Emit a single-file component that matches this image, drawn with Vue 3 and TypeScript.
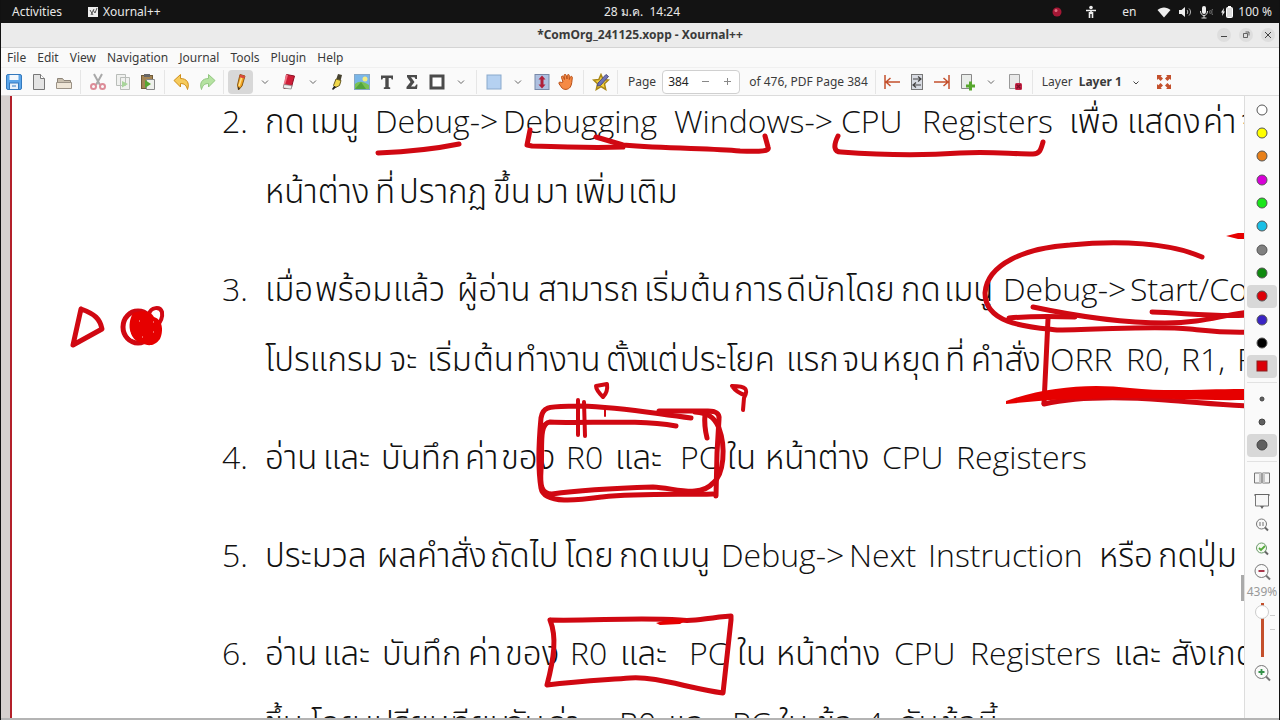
<script setup lang="ts">
import { ref } from 'vue'

interface Tool { name: string; icon?: string; kind?: 'chev' | 'sep'; active?: boolean }
type Word = [text: string, advance: number]

const page = ref(384)
const zoom = ref(96)

const menus = ['File', 'Edit', 'View', 'Navigation', 'Journal', 'Tools', 'Plugin', 'Help']

const sheet = '<path d="M3.5 1.5h7l4 4v11h-11z" fill="#e4e4e4" stroke="#777"/><path d="M10.500 1.500v4h4" fill="#fff" stroke="#777"/>'
const icons: Record<string, string> = {
  save: '<rect x="1.500" y="1.500" width="15" height="15" rx="1.500" fill="#5aa5ea" stroke="#3479bd"/><rect x="4.500" y="2" width="9" height="5" fill="#f4f8fc"/><rect x="4.500" y="10" width="9" height="6.500" fill="#e8f1fa" stroke="#3479bd"/><path d="M7 13h4" stroke="#3479bd"/>',
  create: sheet,
  open: '<path d="M2.500 15V5.500h5l1.500 2h6.500V15z" fill="#c9bfae" stroke="#8d8478"/><path d="M1.500 9.500h15V15.500h-15z" fill="#eee5d6" stroke="#9b9286"/>',
  cut: '<path d="M5 1l6 11M13 1L7 12" stroke="#a9a9a9" stroke-width="2" fill="none"/><circle cx="4.500" cy="13.500" r="2.500" fill="none" stroke="#dc8c98" stroke-width="2"/><circle cx="13.500" cy="13.500" r="2.500" fill="none" stroke="#dc8c98" stroke-width="2"/>',
  copy: '<path d="M2.500 1.500h9v11h-9zM6.500 4.500h9v12h-9z" fill="#f0f1ef" stroke="#b9bdb9"/><path d="M8 8l6 3-6 3.500z" fill="#a8d59a"/>',
  paste: '<rect x="2.500" y="2.500" width="11" height="13" fill="#a48555" stroke="#6f5a38"/><rect x="5" y="1" width="6" height="3" fill="#666"/><path d="M7.500 6.500h8v10h-8z" fill="#eef0ec" stroke="#888"/><path d="M6 7l6 4-6 4z" fill="#55a630"/>',
  undo: '<path d="M1 7.500L7.500 1.500v4c6 0 9.500 4 7 11-1-4-3-6-7-6v3.500z" fill="#f6cb5c" stroke="#cf8e18"/>',
  redo: '<path d="M17 7.500L10.500 1.500v4c-6 0-9.500 4-7 11 1-4 3-6 7-6v3.500z" fill="#b5e2a1" stroke="#92c780"/>',
  pen: '<path d="M8 1.500l5 1.500-3 10-3.500 4-1-5z" fill="#f5a623" stroke="#8b5a14"/><path d="M8 1.500l5 1.500-.700 2.400-5-1.500z" fill="#d9473f"/><path d="M9.500 5l-2.500 8" stroke="#ffe08a" stroke-width="1.500"/><path d="M6.500 17l-.500-3 2 1z" fill="#222"/>',
  eraser: '<path d="M6.500 1.500l8 1.500-3 11-7.500 1.500z" fill="#d01e38" stroke="#8e1025"/><path d="M6 1.500l2 .500-3.500 12-1.500-.500z" fill="#ef7384"/><path d="M4 11.500l8 1-.800 3.500-8-1z" fill="#efefef" stroke="#777" stroke-width=".700"/>',
  marker: '<path d="M10 1l4 1-1.500 6-4.500-1z" fill="#45412f"/><path d="M8 6l5 1.500-1.500 5-4 2-2-2z" fill="#f1d84b" stroke="#6a5c20"/><path d="M6 13l2.500 1-3.500 3-1-1z" fill="#222"/>',
  image: '<rect x="1.500" y="1.500" width="15" height="15" fill="#7ab6e8" stroke="#87a8c6"/><path d="M2 11c4-3 7-3 14 1v4H2z" fill="#79c255"/><path d="M2 16l6-7 5 7z" fill="#53a43e"/><circle cx="12" cy="6" r="2.500" fill="#f5ec82"/>',
  text: '<path d="M3 2.500h12v4h-1.300l-.700-1.500H10.700v9l1.500.500V16H5.800v-1.500L7.300 14V5H5l-.700 1.500H3z" fill="#4b4b4b"/>',
  tex: '<path d="M4 2h10v4h-1.500l-1-1.700H8L11.500 9 8 13.500h4l1.200-2H14.500l-.500 4.500H3.500v-2L7.500 9 4 4z" fill="#4b4b4b"/>',
  shape: '<rect x="3" y="3" width="12" height="12" fill="#fff" stroke="#4b4b4b" stroke-width="3"/>',
  select: '<rect x="2" y="2" width="14" height="14" fill="#b5d1f1" stroke="#8aa9cc"/>',
  vspace: '<rect x="2" y="1.500" width="14" height="15" fill="#aec0e0" stroke="#7989a8"/><path d="M9 2.500l3.500 4h-2v5h2L9 15.500l-3.500-4h2v-5h-2z" fill="#b01f38"/>',
  hand: '<path d="M5 9L3.500 4.500c-.500-1.500 1.500-2 2-.700l1 2.700-.500-4c0-1.500 2-1.500 2.200 0l.800 3.500.300-3.500c.200-1.300 2-1.200 2 0V6.500l1-2.500c.600-1.200 2.200-.600 2 .700-.400 3-.400 7-2 9.300-2 3-6.500 3-8.300 1L1.200 11c-1-1.500.600-2.700 2-1.500z" fill="#f58a45" stroke="#b95018"/>',
  star: '<path d="M9 1.500l2.200 5 5.300.500-4 3.800 1.200 5.700L9 13.700 4.300 16.500l1.200-5.700-4-3.800 5.300-.500z" fill="#f7d43c" stroke="#a98616" stroke-width="1.500"/><path d="M14 1.500l-8 8.500-.500 3 3-.500 8-9z" fill="#7075b6" stroke="#4d4d7d"/>',
  first: '<path d="M2 2v14M3 9h14M7.500 5L3 9l4.500 4" fill="none" stroke="#c4502c" stroke-width="1.500"/>',
  goto: '<rect x="3.500" y="1.500" width="11" height="15" fill="#d8dbe2" stroke="#777"/><path d="M5 6h8M10 3.500L13 6l-3 2.500M13 12H5M8 9.500L5 12l3 2.500" fill="none" stroke="#444" stroke-width="1.200"/>',
  last: '<path d="M16 2v14M1 9h14M10.500 5L15 9l-4.500 4" fill="none" stroke="#c4502c" stroke-width="1.500"/>',
  addpage: '<path d="M3.500 1.500h10v14h-10z" fill="#e9ece9" stroke="#888"/><path d="M12.500 8.500v9M8 13h9" stroke="#57a72d" stroke-width="3"/>',
  delpage: '<path d="M3.500 1.500h10v14h-10z" fill="#e9e9e9" stroke="#999"/><rect x="9" y="10" width="7" height="7" rx="1.500" fill="#c42446"/><path d="M10.500 11.500l4 4M14.500 11.500L10.500 15.500" stroke="#7c0c26" stroke-width="1.300"/>',
  full: '<path d="M2 2h5l-1.300 1.300L8 5.600 5.600 8 3.300 5.700 2 7zM16 2v5l-1.300-1.300L12.400 8 10 5.600l2.300-2.300L11 2zM2 16v-5l1.300 1.300L5.600 10 8 12.400l-2.300 2.300L7 16zM16 16h-5l1.300-1.300L10 12.400l2.400-2.400 2.300 2.300L16 11z" fill="#c4502c"/>',
  pair: '<path d="M1.500 4h7v10h-7zM9.500 4h7v10h-7z" fill="#f4f4f4" stroke="#777"/><path d="M6 4h2.500v10H6zM9.500 4H12v10H9.500z" fill="#c7c7c7"/>',
  present: '<path d="M1.500 3h15" stroke="#666" stroke-width="2"/><path d="M2.500 3v11h13V3" fill="#f7f7f7" stroke="#777"/><path d="M7 14h4l-2 3z" fill="#666"/>',
  zoomfit: '<circle cx="8.500" cy="8" r="5" fill="#f7f7f7" stroke="#777"/><path d="M12 11.500l3 3" stroke="#666" stroke-width="2"/><path d="M7 6v4M10 6v4" stroke="#888" stroke-width="1.200"/>',
  zoomok: '<circle cx="8.500" cy="8" r="5" fill="#f4faf0" stroke="#69976a"/><path d="M12 11.500l3 3" stroke="#666" stroke-width="2"/><path d="M6 8l2 2 4-4" stroke="#54a93a" stroke-width="1.800" fill="none"/>',
  zoomout: '<circle cx="8.500" cy="8" r="6.500" fill="#fafafa" stroke="#777"/><path d="M13 12.500l4 4" stroke="#777" stroke-width="2"/><path d="M5.500 8h6" stroke="#a02238" stroke-width="1.800"/>',
  zoomin: '<circle cx="8.500" cy="8" r="6.500" fill="#fafafa" stroke="#777"/><path d="M13 12.500l4 4" stroke="#777" stroke-width="2"/><path d="M5.500 8h6M8.500 5v6" stroke="#35924a" stroke-width="1.800"/>',
}

const sep: Tool = { name: '', kind: 'sep' }
const left: Tool[] = [
  { name: 'Save', icon: 'save' }, { name: 'New', icon: 'create' }, { name: 'Open', icon: 'open' }, sep,
  { name: 'Cut', icon: 'cut' }, { name: 'Copy', icon: 'copy' }, { name: 'Paste', icon: 'paste' }, sep,
  { name: 'Undo', icon: 'undo' }, { name: 'Redo', icon: 'redo' }, sep,
  { name: 'Pen', icon: 'pen', active: true }, { name: 'Pen options', kind: 'chev' },
  { name: 'Eraser', icon: 'eraser' }, { name: 'Eraser options', kind: 'chev' },
  { name: 'Highlighter', icon: 'marker' }, { name: 'Image', icon: 'image' }, { name: 'Text', icon: 'text' },
  { name: 'TeX', icon: 'tex' }, { name: 'Shape', icon: 'shape' }, { name: 'Shape options', kind: 'chev' }, sep,
  { name: 'Select', icon: 'select' }, { name: 'Select options', kind: 'chev' },
  { name: 'Vertical space', icon: 'vspace' }, { name: 'Hand', icon: 'hand' }, sep,
  { name: 'Default tool', icon: 'star' }, sep,
]
const right: Tool[] = [
  sep, { name: 'First page', icon: 'first' }, { name: 'Go to page', icon: 'goto' }, { name: 'Last page', icon: 'last' },
  { name: 'Add page', icon: 'addpage' }, { name: 'Page options', kind: 'chev' }, { name: 'Delete page', icon: 'delpage' }, sep,
]

const colors = [
  ['White', '#ffffff'], ['Yellow', '#ffff00'], ['Orange', '#e8801a'], ['Magenta', '#d800d8'], ['Green', '#1ae61a'],
  ['Light blue', '#1abfe6'], ['Gray', '#808080'], ['Dark green', '#0f8a0f'], ['Red', '#dc0008'], ['Blue', '#3a24c4'], ['Black', '#000000'],
]
const sizes = [['Fine', 4], ['Medium', 6], ['Thick', 10]] as const
const views: Tool[] = [
  { name: 'Paired pages', icon: 'pair' }, { name: 'Presentation', icon: 'present' },
  { name: 'Zoom 100%', icon: 'zoomfit' }, { name: 'Zoom fit', icon: 'zoomok' }, { name: 'Zoom out', icon: 'zoomout' },
]

const isThai = (s: string) => /[\u0e00-\u0e7f]/.test(s)

const items: { n: number; lines: Word[][] }[] = [
  { n: 2, lines: [
    [['กด', 45], ['เมนู', 65], ['Debug->', 128], ['Debugging', 171], ['Windows->', 167], ['CPU', 81], ['Registers', 147], ['เพื่อ', 58], ['แสดง', 76], ['ค่า', 38], ['จ', 30]],
    [['หน้าต่าง', 110], ['ที่', 24], ['ปรากฏ', 94], ['ขึ้น', 42], ['มา', 39], ['เพิ่ม', 54], ['เติม', 50]],
  ] },
  { n: 3, lines: [
    [['เมื่อ', 50], ['พร้อม', 78], ['แล้ว', 64], ['ผู้อ่าน', 81], ['สามารถ', 106], ['เริ่ม', 46], ['ต้น', 44], ['การ', 52], ['ดีบัก', 60], ['โดย', 55], ['กด', 43], ['เมนู', 59], ['Debug->', 127], ['Start/Con', 140]],
    [['โปรแกรม', 124], ['จะ', 38], ['เริ่ม', 46], ['ต้น', 43], ['ทำงาน', 90], ['ตั้ง', 34], ['แต่', 40], ['ประโยค', 106], ['แรก', 56], ['จน', 40], ['หยุด', 63], ['ที่', 26], ['คำสั่ง', 79], ['ORR', 76], ['R0,', 55], ['R1,', 56], ['R2', 40]],
  ] },
  { n: 4, lines: [
    [['อ่าน', 58], ['และ', 58], ['บันทึก', 84], ['ค่า', 36], ['ของ', 65], ['R0', 49], ['และ', 65], ['PC', 47], ['ใน', 38], ['หน้าต่าง', 117], ['CPU', 74], ['Registers', 140]],
  ] },
  { n: 5, lines: [
    [['ประมวล', 112], ['ผล', 40], ['คำสั่ง', 73], ['ถัด', 40], ['ไป', 35], ['โดย', 54], ['กด', 42], ['เมนู', 60], ['Debug->', 128], ['Next', 79], ['Instruction', 171], ['หรือ', 59], ['กด', 39], ['ปุ่ม', 60]],
  ] },
  { n: 6, lines: [
    [['อ่าน', 58], ['และ', 59], ['บันทึก', 86], ['ค่า', 37], ['ของ', 65], ['R0', 50], ['และ', 69], ['PC', 48], ['ใน', 39], ['หน้าต่าง', 118], ['CPU', 76], ['Registers', 144], ['และ', 57], ['สังเกต', 100]],
    [['ขึ้น', 46], ['โดย', 54], ['เปรียบ', 76], ['เทียบ', 64], ['กับ', 42], ['ค่า', 72], ['R0', 49], ['และ', 64], ['PC', 47], ['ใน', 38], ['ข้อ', 48], ['4', 34], ['กับ', 42], ['ข้อนี้', 80]],
  ] },
]
</script>

<template>
  <div class="desktop">
    <header class="shell">
      <div class="shell-left">
        <button type="button">Activities</button>
        <button type="button" class="app">
          <svg width="10" height="10" viewBox="0 0 10 10"><rect width="10" height="10" fill="#eee" /><path d="M2 3l3 5M6 2L3 8M5 3l2 3 2-5" stroke="#555" fill="none" /></svg>
          Xournal++
        </button>
      </div>
      <time>28 ม.ค.&nbsp; 14:24</time>
      <div class="shell-right">
        <svg class="rec" width="10" height="10" viewBox="0 0 10 10"><circle cx="5" cy="5" r="4.500" fill="#a51735" /><circle cx="4" cy="3.500" r="1.500" fill="#df6f80" /></svg>
        <svg class="access" width="12" height="14" viewBox="0 0 12 14"><circle cx="6" cy="2.500" r="1.800" fill="#eee" /><path d="M1 5.500h10M6 5v4M4.500 13V7M7.500 13V7" stroke="#eee" stroke-width="1.600" /></svg>
        <span class="lang">en</span>
        <svg width="14" height="12" viewBox="0 0 14 12"><path d="M7 11.500L.500 4C4 .500 10 .500 13.500 4z" fill="#eee" /></svg>
        <svg width="14" height="12" viewBox="0 0 14 12"><path d="M1 4h2.500L7 1v10L3.500 8H1z" fill="#eee" /><path d="M9 4c1 1 1 3 0 4M11 2.500c2 2 2 5 0 7" stroke="#bbb" fill="none" /></svg>
        <svg width="14" height="14" viewBox="0 0 14 14"><rect x="3" y="1" width="4" height="8" rx="2" fill="#eee" /><path d="M1.500 6c0 6 7 6 7 0M5 10v3M2.500 13h5" stroke="#ddd" fill="none" /><path d="M11.500 5c-1 1-1 3 0 4M13.500 4c-1 2-1 4 0 6" stroke="#777" fill="none" /></svg>
        <svg class="battery" width="14" height="14" viewBox="0 0 14 14"><path d="M4 3L1 7.500h1.500L2 11l3-4.500H3.500z" fill="#eee" /><rect x="6.500" y="2.500" width="6" height="10" rx="1" fill="#ddd" stroke="#fff" /><path d="M8 1.500h3" stroke="#fff" /></svg>
        <span>100 %</span>
      </div>
    </header>

    <div class="titlebar">
      <h1>*ComOrg_241125.xopp - Xournal++</h1>
      <div class="wm">
        <button type="button" aria-label="Minimize"><svg width="8" height="8" viewBox="0 0 8 8"><path d="M1 5.500h6" stroke="#444" /></svg></button>
        <button type="button" aria-label="Restore"><svg width="8" height="8" viewBox="0 0 8 8"><path d="M1.500 2.500h4v4h-4zM3.500 1h3.500v3.500" stroke="#444" stroke-width=".8" fill="none" /></svg></button>
        <button type="button" aria-label="Close"><svg width="8" height="8" viewBox="0 0 8 8"><path d="M1 1l6 6M7 1L1 7" stroke="#444" /></svg></button>
      </div>
    </div>

    <nav class="menubar">
      <button v-for="m in menus" :key="m" type="button">{{ m }}</button>
    </nav>

    <div class="toolbar">
      <template v-for="(t, i) in left" :key="i">
        <span v-if="t.kind === 'sep'" class="sep"></span>
        <button v-else type="button" :class="['tool', t.kind, { active: t.active }]" :aria-label="t.name">
          <svg v-if="t.icon" width="18" height="18" viewBox="0 0 18 18" v-html="icons[t.icon]"></svg>
          <svg v-else width="8" height="6" viewBox="0 0 8 6"><path d="M1 1.500l3 3 3-3" stroke="#666" fill="none" /></svg>
        </button>
      </template>
      <label class="page-label" for="page">Page</label>
      <div class="spin">
        <input id="page" v-model="page" type="text" inputmode="numeric" />
        <button type="button" aria-label="Previous page" @click="page--"><svg width="9" height="9" viewBox="0 0 9 9"><path d="M1 4.500h7" stroke="#888" /></svg></button>
        <button type="button" aria-label="Next page" @click="page++"><svg width="9" height="9" viewBox="0 0 9 9"><path d="M1 4.500h7M4.500 1v7" stroke="#888" /></svg></button>
      </div>
      <span class="page-total">of 476, PDF Page 384</span>
      <template v-for="(t, i) in right" :key="'r' + i">
        <span v-if="t.kind === 'sep'" class="sep"></span>
        <button v-else type="button" :class="['tool', t.kind]" :aria-label="t.name">
          <svg v-if="t.icon" width="18" height="18" viewBox="0 0 18 18" v-html="icons[t.icon]"></svg>
          <svg v-else width="8" height="6" viewBox="0 0 8 6"><path d="M1 1.500l3 3 3-3" stroke="#666" fill="none" /></svg>
        </button>
      </template>
      <button type="button" class="layer">
        <span>Layer</span><b>Layer 1</b>
        <svg width="8" height="6" viewBox="0 0 8 6"><path d="M1.500 2.500l2.500 2.500L6.500 2.500" stroke="#444" fill="none" /></svg>
      </button>
      <button type="button" class="tool" aria-label="Fullscreen"><svg width="18" height="18" viewBox="0 0 18 18" v-html="icons.full"></svg></button>
    </div>

    <div class="workspace">
      <main class="canvas">
        <article class="paper">
          <ol>
            <li v-for="item in items" :key="item.n">
              <span class="num">{{ item.n }}.</span>
              <div class="body">
                <p v-for="(line, l) in item.lines" :key="l">
                  <span v-for="(w, k) in line" :key="k" :class="['word', { thai: isThai(w[0]) }]" :style="{ width: w[1] + 'px' }">{{ w[0] }}</span>
                </p>
              </div>
            </li>
          </ol>
        </article>
        <svg class="ink" width="1244" height="622" viewBox="1 96 1244 622">
          <g class="stroke">
            <path d="M378 153Q425 151 459 144" />
            <path d="M530 130L527 145L532 146C560 147 595 148 623 147" />
            <path d="M596 137L623 145C670 149 710 148 740 151C762 152 770 151 768 147L765 136" />
            <path d="M838 136C833 146 834 152 841 152C880 155 920 156 960 153C990 151 1010 154 1033 154C1040 154 1041 149 1043 142" />
            <path d="M1202 257C1170 243 1120 240 1070 245C1025 248 987 264 985 293C985 325 1030 327 1057 330C1110 330 1150 325 1190 329C1210 331 1225 333 1250 332" />
            <path d="M1033 307C1080 317 1125 323 1165 323C1205 323 1220 315 1250 312" />
            <path d="M1152 312C1185 313 1215 317 1250 315" />
            <path d="M1009 318C1030 316 1050 316 1075 317" />
            <path d="M1048 319L1046 362L1044 403" />
            <path d="M1044 404C1080 396 1125 397 1165 400C1195 402 1220 405 1250 406" />
            <path d="M81 309L73 345L102 329C100 319 95 314 81 309" />
            <ellipse cx="138" cy="327" rx="15" ry="16" />
            <path d="M149 314C151 307 160 306 162 312C163 318 160 323 156 327" class="mid" />
            <path d="M691 418C650 413 622 407 580 406C550 407 543 405 541 418C538 450 538 470 541 488C544 505 580 500 602 497C640 493 680 495 713 494" />
            <path d="M676 426C635 419 585 424 550 422C538 423 543 450 541 470C540 485 541 494 552 494C580 490 620 488 653 487C675 488 700 498 713 483C724 475 726 447 719 428C714 416 707 413 695 412" />
            <path d="M659 411L708 411Q720 411 719 419L717 453L716 496" />
            <path d="M705 414C704 425 705 430 707 438" />
            <path d="M578 400V435M584 402L585 436" class="mid" />
            <path d="M596 386L607 384C608 391 605 395 603 397Q596 390 596 386" class="mid" />
            <path d="M605 408V416" class="thin" />
            <path d="M732 386C746 386 749 389 744 398L743 410M732 386Q737 393 745 395" class="mid" />
            <path d="M550 620C557 637 554 658 547 685C580 681 605 680 630 678C655 676 688 688 723 693L731 620V616C704 618 695 622 680 620C635 617 595 621 550 620" />
          </g>
          <g class="solid">
            <path d="M133 313C143 309 152 312 154 317C164 320 163 333 160 339C154 347 147 346 142 343C130 341 126 325 133 313Z" />
            <path d="M1006 401C1045 387 1090 383 1130 388C1170 392 1200 389 1245 389V400C1190 401 1140 396 1090 399L1050 400L1006 404Z" />
            <path d="M1226 236L1238 233H1245V239H1238Z" />
            <path d="M656 623L670 619H688L680 624L660 625Z" />
          </g>
          <path d="M127 324C126 332 129 337 132 339C131 333 129 329 127 324Z" fill="#fff" />
          <path d="M139 321h1M142 337h1M153 332h1M153 322h1" class="specks" />
        </svg>
        <span class="scroll-thumb"></span>
      </main>

      <aside class="side">
        <div class="cells palette">
          <button v-for="(c, i) in colors" :key="c[0]" type="button" :class="{ active: i === 8 }" :aria-label="c[0]">
            <svg width="12" height="12" viewBox="0 0 12 12"><circle cx="6" cy="6" r="5" :fill="c[1]" stroke="#555" /></svg>
          </button>
          <button type="button" class="active" aria-label="Custom color">
            <svg width="12" height="12" viewBox="0 0 12 12"><rect x="1" y="1" width="10" height="10" fill="#dc0008" stroke="#8a2020" /></svg>
          </button>
        </div>
        <span class="rule"></span>
        <div class="cells sizes">
          <button v-for="(s, i) in sizes" :key="s[0]" type="button" :class="{ active: i === 2 }" :aria-label="s[0]">
            <svg width="12" height="12" viewBox="0 0 12 12"><circle cx="6" cy="6" :r="s[1] / 2" fill="#606060" stroke="#444" /></svg>
          </button>
        </div>
        <span class="rule"></span>
        <div class="cells views">
          <button v-for="v in views" :key="v.name" type="button" :aria-label="v.name">
            <svg width="18" height="18" viewBox="0 0 18 18" v-html="icons[v.icon!]"></svg>
          </button>
        </div>
        <output class="pct">439%</output>
        <div class="slider">
          <input v-model="zoom" type="range" min="0" max="100" aria-label="Zoom" />
          <i></i><i></i>
        </div>
        <button type="button" class="zoomin" aria-label="Zoom in"><svg width="18" height="18" viewBox="0 0 18 18" v-html="icons.zoomin"></svg></button>
      </aside>
    </div>
  </div>
</template>

<style>
body { background: #fafafa; }
</style>

<style scoped>
* { box-sizing: border-box; }
.desktop {
  height: 100vh; display: flex; flex-direction: column; overflow: hidden;
  font: 12px/16px "Noto Sans", "Open Sans", sans-serif; color: #3a3a3a; background: #fafafa;
  border: solid #111; border-width: 0 1px;
}
button { font: inherit; color: inherit; border: 0; background: none; padding: 0; display: flex; align-items: center; justify-content: center; }
h1, p, ol { margin: 0; padding: 0; }
svg { display: block; flex: none; }

.shell { flex: none; height: 23px; background: #131313; color: #e8e8e8; display: grid; grid-template-columns: 1fr auto 1fr; align-items: center; padding: 0 7px 0 11px; }
.shell-left, .shell-right { display: flex; align-items: center; }
.shell-left { gap: 26px; }
.shell-right { justify-content: flex-end; gap: 7px; }
.app { gap: 5px; }
.rec { margin-right: 16px; }
.access { margin-right: 18px; }
.lang { margin-right: 14px; }
.battery { margin-right: -3px; }

.titlebar { flex: none; height: 25px; background: #ebebeb; border-bottom: 1px solid #d4d4d4; display: flex; align-items: center; justify-content: center; position: relative; }
.titlebar h1 { font-size: 12px; line-height: 16px; font-weight: 700; }
.wm { position: absolute; right: 4px; top: 5px; display: flex; gap: 8px; }
.wm button { width: 14px; height: 14px; border-radius: 50%; background: #dedede; }

.menubar { flex: none; height: 20px; display: flex; gap: 11px; padding-left: 6px; border-bottom: 1px solid #f0f0f0; }
.toolbar { flex: none; height: 28px; display: flex; align-items: center; border-bottom: 1px solid #dcdcdc; }
.tool { flex: none; width: 25px; height: 24px; border-radius: 4px; }
.tool.chev { width: 23px; }
.tool.active { background: #d8d8d8; }
.sep { flex: none; width: 9px; height: 24px; display: flex; justify-content: center; }
.sep::before { content: ""; width: 1px; background: #e6e6e6; }
.page-label { margin: 0 6px; }
.spin { display: flex; width: 78px; height: 24px; border: 1px solid #d0d0d0; border-radius: 4px; background: #fff; }
.spin input { width: 31px; border: 0; padding: 0 0 0 5px; background: none; font: inherit; color: #222; outline: none; }
.spin button { flex: 1; }
.page-total { margin: 0 3px 0 9px; }
.layer { gap: 6px; margin: 0 12px 0 5px; }
.layer svg { margin-left: 4px; }

.workspace { flex: 1; min-height: 0; display: flex; border-bottom: 2px solid #b4b4b4; }
.canvas { flex: 1; min-width: 0; position: relative; overflow: hidden; background: #d5d0ce; padding-left: 9px; }
.paper { display: flow-root; height: 100%; background: #fff; border-left: 2px solid #b3202a; color: #111; font: 300 32px/70px "Open Sans", "Noto Sans Thai", "Noto Sans", sans-serif; }
ol { list-style: none; margin-top: -10px; padding-left: 210px; display: flex; flex-direction: column; gap: 28px; }
li { display: flex; }
.num { flex: none; width: 43px; }
.body { flex: none; }
p { display: flex; white-space: nowrap; height: 70px; }
.word { flex: none; }
.thai { font-size: 33px; }
.ink { position: absolute; left: 0; top: 0; }
.stroke { fill: none; stroke: #d00812; stroke-width: 5px; stroke-linecap: round; stroke-linejoin: round; }
.stroke .mid { stroke-width: 4px; }
.stroke .thin { stroke-width: 2px; }
.solid { fill: #e60000; }
.specks { stroke: #fbb; stroke-width: 1px; }
.scroll-thumb { position: absolute; right: 0; top: 479px; width: 3px; height: 26px; background: #aaa; }

.side { flex: none; width: 35px; border-left: 1px solid #ddd; background: #fafafa; display: flex; flex-direction: column; align-items: center; padding-top: 2px; }
.cells { flex: none; width: 30px; display: grid; grid-auto-rows: 1fr; }
.cells button { border-radius: 4px; }
.cells .active { background: #d8d8d8; }
.palette { height: 280px; }
.sizes { height: 70px; }
.views { height: 118px; }
.rule { flex: none; width: 30px; height: 1px; margin: 4px 0; background: #e2e2e2; }
.pct { font-size: 12px; color: #999; }
.slider { display: flex; position: relative; margin-top: 3px; width: 30px; height: 58px; justify-content: center; }
.slider input { appearance: none; writing-mode: vertical-lr; direction: rtl; width: 14px; height: 54px; margin: 0; background: linear-gradient(#c4502c, #c4502c) center / 3px 100% no-repeat; }
.slider input::-webkit-slider-thumb { appearance: none; width: 14px; height: 14px; border-radius: 50%; background: #fff; border: 1px solid #ccc; }
.slider i { position: absolute; right: 2px; top: 12px; width: 5px; height: 1px; background: #ccc; }
.slider i + i { top: 26px; }
.zoomin { width: 24px; height: 24px; }
</style>
